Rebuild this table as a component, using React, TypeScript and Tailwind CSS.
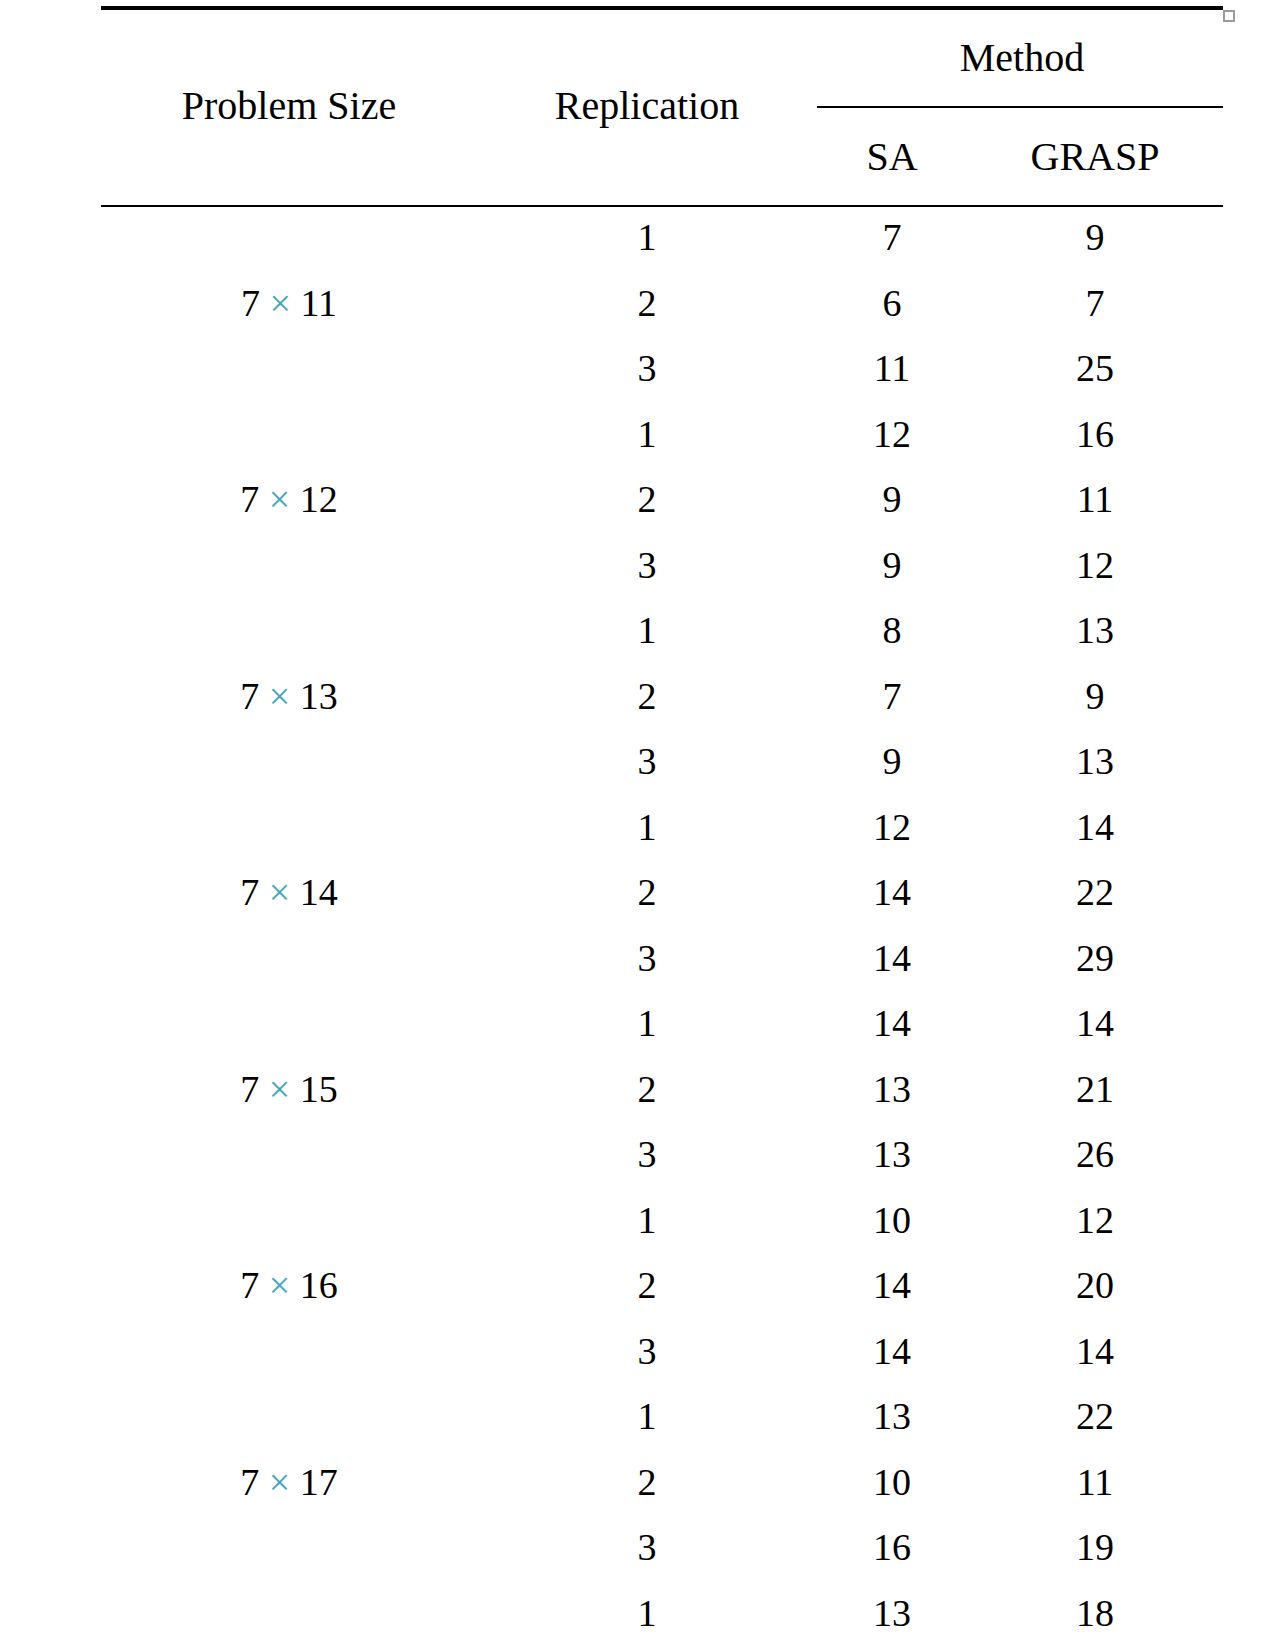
import React from "react";

const groups: { label: string; rows: [string, string, string][] }[] = [
  { label: "11", rows: [["1", "7", "9"], ["2", "6", "7"], ["3", "11", "25"]] },
  { label: "12", rows: [["1", "12", "16"], ["2", "9", "11"], ["3", "9", "12"]] },
  { label: "13", rows: [["1", "8", "13"], ["2", "7", "9"], ["3", "9", "13"]] },
  { label: "14", rows: [["1", "12", "14"], ["2", "14", "22"], ["3", "14", "29"]] },
  { label: "15", rows: [["1", "14", "14"], ["2", "13", "21"], ["3", "13", "26"]] },
  { label: "16", rows: [["1", "10", "12"], ["2", "14", "20"], ["3", "14", "14"]] },
  { label: "17", rows: [["1", "13", "22"], ["2", "10", "11"], ["3", "16", "19"]] },
];

const font = { fontFamily: '"Liberation Serif", "Times New Roman", serif' };

export default function App() {
  return (
    <div className="bg-white w-[1282px] min-h-[1635px] overflow-hidden text-black" style={font}>
      <div className="relative ml-[101px] w-[1122px] pt-[6px]">
        <div className="absolute right-[-12px] top-[10px] w-[12px] h-[12px] border-2 border-[#9a9a9a] bg-white" />
        {/* Header */}
        <div className="border-t-[4px] border-black border-b-2 grid grid-cols-[376px_340px_406px] h-[201px]">
          <div className="flex items-center justify-center text-[40px] pb-[4px]">Problem Size</div>
          <div className="flex items-center justify-center text-[40px] pb-[4px]">Replication</div>
          <div className="flex flex-col">
            <div className="h-[98px] flex items-center justify-center text-[40px] pl-[4px] border-b-2 border-black">Method</div>
            <div className="flex-1 grid grid-cols-[150px_256px]">
              <div className="flex items-center justify-center text-[40px]">SA</div>
              <div className="flex items-center justify-center text-[40px]">GRASP</div>
            </div>
          </div>
        </div>
        {/* Body */}
        <div className="flex flex-col mt-[-2px]">
          {groups.map((g) => (
            <div key={g.label} className="grid grid-cols-[376px_340px_150px_256px]">
              <div className="row-span-3 flex items-center justify-center text-[38px]">
                <span>
                  7 <span className="text-[#45a8b8]">×</span> {g.label}
                </span>
              </div>
              {g.rows.map((r, i) => (
                <React.Fragment key={i}>
                  <div className="h-[65.5px] flex items-center justify-center text-[38px]">{r[0]}</div>
                  <div className="h-[65.5px] flex items-center justify-center text-[38px]">{r[1]}</div>
                  <div className="h-[65.5px] flex items-center justify-center text-[38px]">{r[2]}</div>
                </React.Fragment>
              ))}
            </div>
          ))}
          <div className="grid grid-cols-[376px_340px_150px_256px]">
            <div />
            <div className="h-[65.5px] flex items-center justify-center text-[38px]">1</div>
            <div className="h-[65.5px] flex items-center justify-center text-[38px]">13</div>
            <div className="h-[65.5px] flex items-center justify-center text-[38px]">18</div>
          </div>
        </div>
      </div>
    </div>
  );
}
